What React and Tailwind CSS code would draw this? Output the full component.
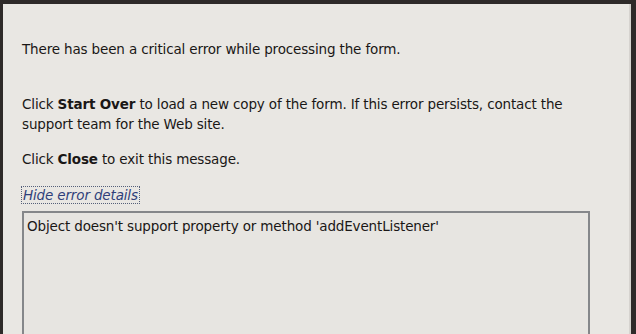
import React from 'react';

export default function App() {
  return (
    <div className="w-[636px] h-[334px] bg-[#2e2a29] overflow-hidden" style={{ fontFamily: '"DejaVu Sans", Verdana, sans-serif' }}>
      <div className="ml-[3px] mr-[5px] mt-[4px] h-[330px] bg-[#e9e7e3] border-r-2 border-[#d6d3cf] pl-[19px] pt-[35px] text-[13.5px] leading-[20px] text-[#1a1716] tracking-[-0.15px]">
        <p>There has been a critical error while processing the form.</p>
        <p className="mt-[35px]">
          Click <b>Start Over</b> to load a new copy of the form. If this error persists, contact the
          <br />
          support team for the Web site.
        </p>
        <p className="mt-[15px]">
          Click <b>Close</b> to exit this message.
        </p>
        <div className="mt-[18px] leading-[16px]">
          <span className="italic text-[#2f3f7a] outline-1 outline-dotted outline-[#55607a] px-[1px]">Hide error details</span>
        </div>
        <div className="mt-[8px] mr-[39px] h-[200px] border-2 border-[#85878a] bg-[#e7e5e1] px-[3px] pt-[3px]">
          Object doesn't support property or method 'addEventListener'
        </div>
      </div>
    </div>
  );
}
